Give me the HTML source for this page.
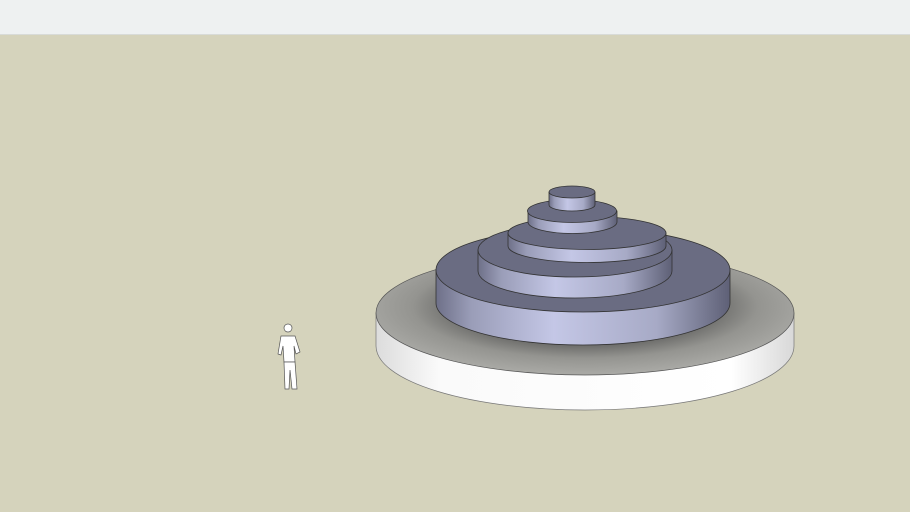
<!DOCTYPE html>
<html><head><style>
html,body{margin:0;padding:0;width:910px;height:512px;overflow:hidden;background:#d5d3bc;}
.top{position:absolute;left:0;top:0;width:910px;height:34px;background:#eef1f1;border-bottom:1px solid #d8dbd8;}
svg{position:absolute;left:0;top:0;}
</style></head><body>
<div class="top"></div>
<svg width="910" height="512" viewBox="0 0 910 512">
<defs>
<linearGradient id="side" x1="0" x2="1" y1="0" y2="0">
<stop offset="0" stop-color="#6e7088"/><stop offset="0.12" stop-color="#9a9db8"/>
<stop offset="0.4" stop-color="#c4c7e6"/><stop offset="0.75" stop-color="#a7aac6"/>
<stop offset="1" stop-color="#5e6076"/></linearGradient>
<linearGradient id="base" x1="0" x2="1"><stop offset="0" stop-color="#dcdcdc"/><stop offset="0.15" stop-color="#fafafa"/><stop offset="0.85" stop-color="#ffffff"/><stop offset="1" stop-color="#d8d8d8"/></linearGradient>
<radialGradient id="bt" cx="0.5" cy="0.45" r="0.55"><stop offset="0.55" stop-color="#6a6a68"/><stop offset="0.75" stop-color="#949490"/><stop offset="1" stop-color="#aaaaa6"/></radialGradient>
</defs>
<path d="M376 313 L376 346 A209 64 0 0 0 794 346 L794 313 Z" fill="url(#base)" stroke="#777" stroke-width="0.7"/>
<ellipse cx="585" cy="313" rx="209" ry="62" fill="url(#bt)" stroke="#555" stroke-width="0.7"/>
<path d="M436 270 L436 303 A147 42 0 0 0 730 303 L730 270 Z" fill="url(#side)" stroke="#333" stroke-width="0.8"/>
<ellipse cx="583" cy="270" rx="147" ry="42" fill="#6a6c82" stroke="#333" stroke-width="0.8"/>
<path d="M478 250 L478 271 A97 27 0 0 0 672 271 L672 250 Z" fill="url(#side)" stroke="#333" stroke-width="0.8"/>
<ellipse cx="575" cy="250" rx="97" ry="27" fill="#6a6c82" stroke="#333" stroke-width="0.8"/>
<path d="M508 233 L508 246 A79 16.5 0 0 0 666 246 L666 233 Z" fill="url(#side)" stroke="#333" stroke-width="0.8"/>
<ellipse cx="587" cy="233" rx="79" ry="16.5" fill="#6a6c82" stroke="#333" stroke-width="0.8"/>
<path d="M528 211 L528 222 A44.5 11.5 0 0 0 617 222 L617 211 Z" fill="url(#side)" stroke="#333" stroke-width="0.8"/>
<ellipse cx="572" cy="211" rx="44.5" ry="11.5" fill="#6a6c82" stroke="#333" stroke-width="0.8"/>
<path d="M549 192 L549 205 A23 6 0 0 0 595 205 L595 192 Z" fill="url(#side)" stroke="#333" stroke-width="0.8"/>
<ellipse cx="572" cy="192" rx="23" ry="6" fill="#6a6c82" stroke="#333" stroke-width="0.8"/>
<g fill="#fff" stroke="#555" stroke-width="0.7">
<circle cx="288" cy="328" r="4"/>
<path d="M281 336 L295 336 L300 352 L296 354 L294 346 L295 362 L284 362 L283 346 L281 355 L278 354 Z"/>
<path d="M284 362 L285 389 L289 389 L290 370 L292 389 L297 389 L295 362 Z"/>
</g>
</svg>
</body></html>
